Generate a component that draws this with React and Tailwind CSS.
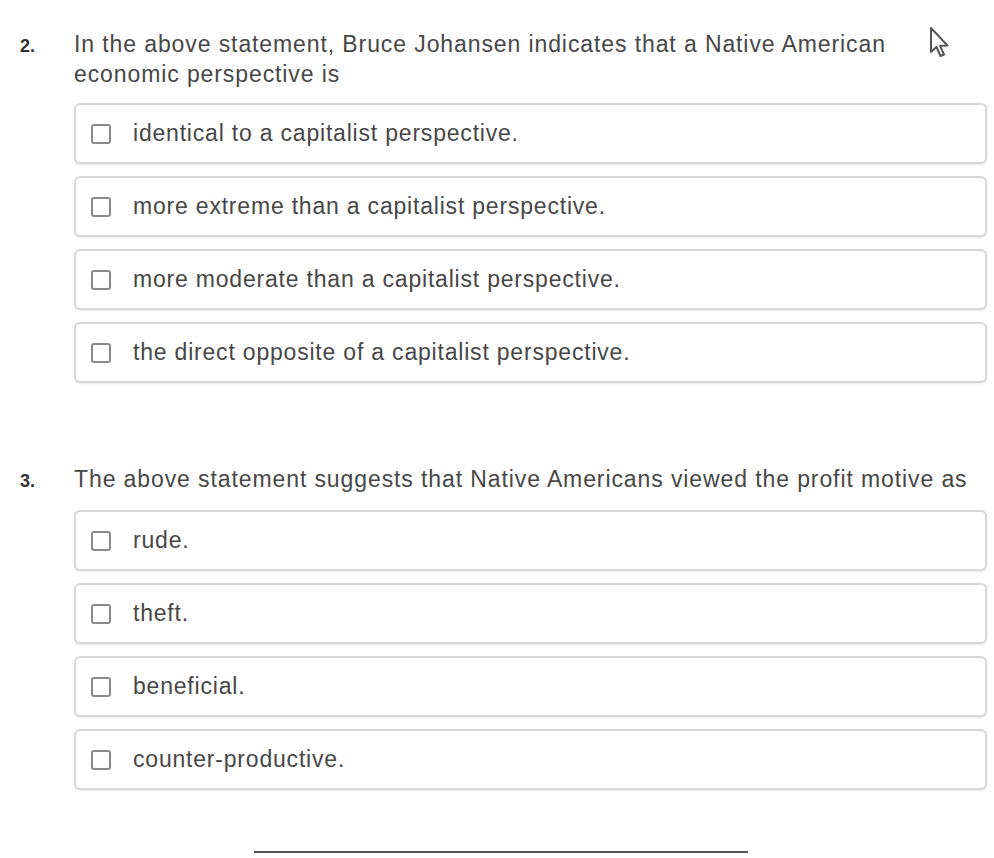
import React from 'react'

const questions = [
  {
    num: '2.',
    text: 'In the above statement, Bruce Johansen indicates that a Native American economic perspective is',
    width: 'max-w-[850px]',
    gap: 'mt-[14px]',
    options: [
      'identical to a capitalist perspective.',
      'more extreme than a capitalist perspective.',
      'more moderate than a capitalist perspective.',
      'the direct opposite of a capitalist perspective.',
    ],
  },
  {
    num: '3.',
    text: 'The above statement suggests that Native Americans viewed the profit motive as',
    width: 'whitespace-nowrap',
    gap: 'mt-[16px]',
    options: ['rude.', 'theft.', 'beneficial.', 'counter-productive.'],
  },
]

function Option({ label }) {
  return (
    <label className="flex h-[61px] items-center rounded-md border-2 border-[#d6d6d6] bg-white pl-[15px] shadow-[0_1px_2px_rgba(0,0,0,0.08)]">
      <span className="h-[20px] w-[20px] shrink-0 rounded-[3px] border-2 border-[#8a8a8a] bg-white" />
      <span className="ml-[22px] text-[23px] tracking-[0.8px] text-[#474747]">{label}</span>
    </label>
  )
}

export default function App() {
  return (
    <div className="relative h-[858px] w-[994px] overflow-hidden bg-white font-['Liberation_Sans',Arial,sans-serif]">
      {/* cursor */}
      <svg className="absolute left-[928px] top-[26px]" width="26" height="34" viewBox="0 0 26 34">
        <path d="M3 2 L3 26 L8.5 21 L12.5 30 L16 28.5 L12 19.8 L19.5 19.5 Z" fill="#fff" stroke="#555" strokeWidth="2" strokeLinejoin="round" />
      </svg>

      <div className="flex flex-col gap-[81px] pl-[20px] pr-[7px] pt-[29px]">
        {questions.map((q) => (
          <div key={q.num} className="flex">
            <div className="w-[54px] shrink-0 pt-[4px] text-[18px] font-bold text-[#333]">{q.num}</div>
            <div className="flex flex-1 flex-col">
              <p className={`${q.width} text-[23px] leading-[30px] tracking-[0.9px] text-[#474747]`}>{q.text}</p>
              <div className={`${q.gap} flex flex-col gap-[12px]`}>
                {q.options.map((o) => (
                  <Option key={o} label={o} />
                ))}
              </div>
            </div>
          </div>
        ))}
        <div className="flex justify-center pr-[6px]">
          <div className="-mt-[20px] h-[2px] w-[494px] bg-[#555]" />
        </div>
      </div>
    </div>
  )
}
